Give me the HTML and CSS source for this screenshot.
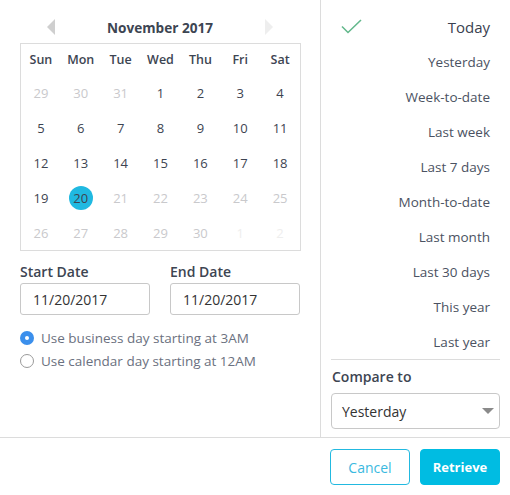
FILE: index.html
```html
<!DOCTYPE html>
<html>
<head>
<meta charset="utf-8">
<link rel="stylesheet" href="styles.css">
</head>
<body>
<div class="picker">
  <div class="main">
    <div class="left">
      <div class="cal-nav">
        <svg class="arrow" width="10" height="16" viewBox="0 0 10 16"><polygon points="9,0 9,16 1,8" fill="#cfcfcf"/></svg>
        <div class="month">November 2017</div>
        <svg class="arrow" width="10" height="16" viewBox="0 0 10 16"><polygon points="1,0 1,16 9,8" fill="#eeeeee"/></svg>
      </div>
      <div class="cal">
        <div class="dh">Sun</div><div class="dh">Mon</div><div class="dh">Tue</div><div class="dh">Wed</div><div class="dh">Thu</div><div class="dh">Fri</div><div class="dh">Sat</div>
        <div class="d out">29</div><div class="d out">30</div><div class="d out">31</div><div class="d">1</div><div class="d">2</div><div class="d">3</div><div class="d">4</div>
        <div class="d">5</div><div class="d">6</div><div class="d">7</div><div class="d">8</div><div class="d">9</div><div class="d">10</div><div class="d">11</div>
        <div class="d">12</div><div class="d">13</div><div class="d">14</div><div class="d">15</div><div class="d">16</div><div class="d">17</div><div class="d">18</div>
        <div class="d">19</div><div class="d"><span class="sel">20</span></div><div class="d dis">21</div><div class="d dis">22</div><div class="d dis">23</div><div class="d dis">24</div><div class="d dis">25</div>
        <div class="d dis">26</div><div class="d dis">27</div><div class="d dis">28</div><div class="d dis">29</div><div class="d dis">30</div><div class="d next">1</div><div class="d next">2</div>
      </div>
      <div class="dates">
        <div class="field">
          <div class="label">Start Date</div>
          <div class="input">11/20/2017</div>
        </div>
        <div class="field">
          <div class="label">End Date</div>
          <div class="input">11/20/2017</div>
        </div>
      </div>
      <div class="radios">
        <div class="radio-row"><span class="radio on"></span><span>Use business day starting at 3AM</span></div>
        <div class="radio-row"><span class="radio"></span><span>Use calendar day starting at 12AM</span></div>
      </div>
    </div>
    <div class="right">
      <div class="ranges">
        <div class="range active"><svg class="check" width="22" height="16" viewBox="0 0 22 16"><polyline points="1,7.5 7,13.5 20,1" fill="none" stroke="#63b88c" stroke-width="1.6"/></svg><span>Today</span></div>
        <div class="range"><span>Yesterday</span></div>
        <div class="range"><span>Week-to-date</span></div>
        <div class="range"><span>Last week</span></div>
        <div class="range"><span>Last 7 days</span></div>
        <div class="range"><span>Month-to-date</span></div>
        <div class="range"><span>Last month</span></div>
        <div class="range"><span>Last 30 days</span></div>
        <div class="range"><span>This year</span></div>
        <div class="range"><span>Last year</span></div>
      </div>
      <div class="compare">
        <div class="label">Compare to</div>
        <div class="select"><span>Yesterday</span><svg width="12" height="6" viewBox="0 0 12 6"><polygon points="0,0 12,0 6,6" fill="#8a8a8a"/></svg></div>
      </div>
    </div>
  </div>
  <div class="footer">
    <button class="btn cancel">Cancel</button>
    <button class="btn retrieve">Retrieve</button>
  </div>
</div>
</body>
</html>
```

FILE: styles.css
```css
* { box-sizing: border-box; }
body {
  margin: 0;
  background: #fff;
  font-family: "Open Sans", "Noto Sans", sans-serif;
  color: #3d4451;
}
.picker { width: 510px; }
.main {
  display: flex;
  height: 438px;
  border-bottom: 1px solid #dcdcdc;
}
.left {
  width: 321px;
  border-right: 1px solid #dcdcdc;
  padding-left: 20px;
}
.cal-nav {
  height: 43px;
  width: 280px;
  display: flex;
  align-items: center;
  justify-content: space-between;
  padding: 11px 26px 0 26px;
}
.month {
  font-size: 13.6px;
  font-weight: 700;
  color: #3d4552;
}
.cal {
  width: 281px;
  border: 1px solid #dcdcdc;
  display: grid;
  grid-template-columns: repeat(7, 1fr);
  grid-template-rows: 31px repeat(5, 35px);
}
.dh {
  display: flex;
  align-items: center;
  justify-content: center;
  font-size: 12.5px;
  font-weight: 600;
  color: #3d4552;
}
.d {
  display: flex;
  align-items: center;
  justify-content: center;
  font-size: 13px;
  color: #3d4451;
}
.d.out, .d.dis { color: #c9c9cc; }
.d.next { color: #eeeeee; }
.sel {
  width: 24px;
  height: 24px;
  border-radius: 50%;
  background: #20b9e1;
  display: flex;
  align-items: center;
  justify-content: center;
  color: #3d4451;
}
.dates {
  display: flex;
  gap: 20px;
  margin-top: 12px;
}
.label {
  font-size: 14px;
  font-weight: 600;
  color: #3d4552;
  line-height: 18px;
}
.input {
  margin-top: 2px;
  width: 130px;
  height: 32px;
  border: 1px solid #c8c8c8;
  border-radius: 3px;
  padding-left: 12px;
  font-size: 14px;
  color: #333;
  display: flex;
  align-items: center;
}
.radios { margin-top: 11px; }
.radio-row {
  display: flex;
  align-items: center;
  height: 23px;
  font-size: 13.5px;
  color: #6b7180;
}
.radio {
  width: 14px;
  height: 14px;
  border-radius: 50%;
  border: 1px solid #9a9a9a;
  margin-right: 7px;
  flex: none;
}
.radio.on {
  border: none;
  background: #3b8fec;
  position: relative;
}
.radio.on::after {
  content: "";
  position: absolute;
  left: 5px;
  top: 5px;
  width: 4px;
  height: 4px;
  border-radius: 50%;
  background: #fff;
}
.right {
  width: 189px;
  padding: 0 10px;
  display: flex;
  flex-direction: column;
}
.ranges {
  padding-top: 9px;
  border-bottom: 1px solid #dcdcdc;
}
.range {
  height: 35px;
  display: flex;
  align-items: center;
  justify-content: flex-end;
  padding-right: 10px;
  font-size: 13.5px;
  color: #4b5262;
  position: relative;
}
.range.active { color: #3a4150; font-size: 15px; }
.check {
  position: absolute;
  left: 10px;
  top: 10px;
}
.compare { padding-top: 8px; }
.compare .label { padding-left: 1px; }
.select {
  margin-top: 7px;
  height: 36px;
  border: 1px solid #c8c8c8;
  border-radius: 4px;
  display: flex;
  align-items: center;
  justify-content: space-between;
  padding: 0 5px 0 10px;
  font-size: 14px;
  color: #333;
}
.footer {
  display: flex;
  justify-content: flex-end;
  gap: 10px;
  padding: 11px 10px 0 0;
}
.btn {
  width: 80px;
  height: 36px;
  border-radius: 4px;
  font-family: "Open Sans", "Noto Sans", sans-serif;
  font-size: 14px;
}
.cancel {
  background: #fff;
  border: 1px solid #22b9e0;
  color: #3ab9e0;
}
.retrieve {
  background: #00bce2;
  border: 1px solid #00bce2;
  color: #fff;
  font-weight: 700;
  font-size: 13px;
}
```
